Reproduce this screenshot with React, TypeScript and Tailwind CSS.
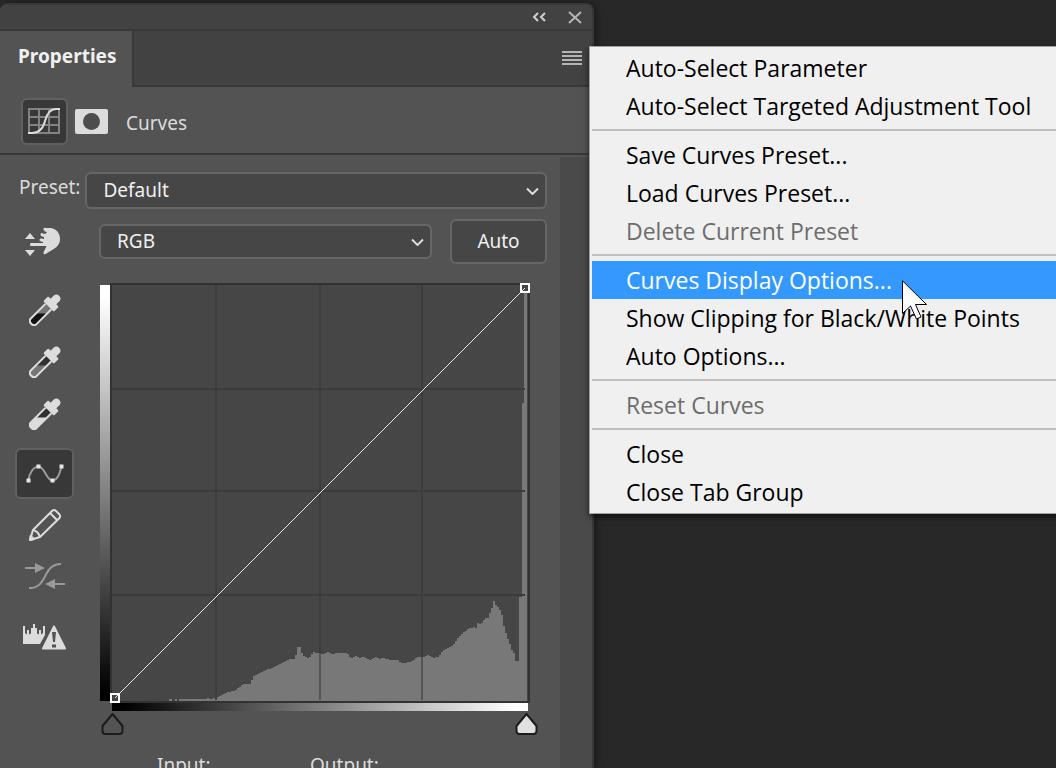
import React, { useState } from 'react';

interface MenuItem {
  label: string;
  disabled?: boolean;
}

const menuGroups: MenuItem[][] = [
  [{ label: 'Auto-Select Parameter' }, { label: 'Auto-Select Targeted Adjustment Tool' }],
  [
    { label: 'Save Curves Preset...' },
    { label: 'Load Curves Preset...' },
    { label: 'Delete Current Preset', disabled: true },
  ],
  [
    { label: 'Curves Display Options...' },
    { label: 'Show Clipping for Black/White Points' },
    { label: 'Auto Options...' },
  ],
  [{ label: 'Reset Curves', disabled: true }],
  [{ label: 'Close' }, { label: 'Close Tab Group' }],
];

// outline of the histogram, x and y in chart units
const histogram: [number, number][] = [
  [79, 416], [104, 416], [106, 415], [110, 416], [116, 414], [120, 412], [128, 409], [135, 407],
  [140, 403], [143, 401], [149, 401], [153, 393], [160, 389], [168, 386], [177, 382], [188, 376],
  [193, 376], [195, 372], [197, 364], [199, 364], [200, 369], [203, 373], [208, 375], [212, 369],
  [216, 370], [218, 369], [222, 371], [227, 369], [230, 371], [237, 370], [246, 370], [250, 375],
  [255, 373], [258, 375], [263, 374], [270, 377], [275, 374], [278, 376], [283, 375], [290, 377],
  [297, 377], [300, 380], [310, 379], [317, 374], [322, 374], [328, 372], [332, 375], [337, 374],
  [343, 367], [352, 363], [357, 355], [362, 350], [367, 346], [373, 344], [375, 345], [377, 340],
  [380, 341], [385, 335], [388, 335], [389, 330], [391, 325], [393, 318], [395, 322], [398, 325],
  [401, 332], [402, 340], [405, 350], [410, 364], [412, 370], [414, 370], [415, 378], [417, 378],
  [418, 372], [419, 360], [420, 314],
];

function heightAt(x: number) {
  const i = histogram.findIndex((p) => p[0] > x);
  if (i < 1) return 418;
  const [x0, y0] = histogram[i - 1];
  const [x1, y1] = histogram[i];
  return Math.round(y0 + ((y1 - y0) * (x - x0)) / (x1 - x0));
}

function histogramPath() {
  let d = 'M69 418V416H72V418H75V416H77V418H79';
  for (let x = 79; x < 419; x += 2) {
    d += `V${heightAt(x)}H${x + 2}`;
  }
  return d + 'V314H422V120H424V9H427V418H79Z';
}

function CurvesChart() {
  return (
    <svg width="440" height="454" viewBox="0 0 440 454" role="img" aria-label="Curve with histogram">
      <defs>
        <linearGradient id="output-ramp" x1="0" y1="0" x2="0" y2="1">
          <stop offset="0.03" stopColor="#fff" />
          <stop offset="0.98" stopColor="#000" />
        </linearGradient>
        <linearGradient id="input-ramp" x1="0" y1="0" x2="1" y2="0">
          <stop offset="0.03" stopColor="#000" />
          <stop offset="0.97" stopColor="#fff" />
        </linearGradient>
      </defs>
      <g shapeRendering="crispEdges">
        <rect x="0" y="2" width="10" height="416" fill="url(#output-ramp)" />
        <rect x="10" y="0" width="420" height="420" fill="#323232" />
        <rect x="12" y="2" width="416" height="416" fill="#464646" />
        <path d={histogramPath()} fill="#787878" />
        <path d="M115 2h2v415h-2zM219 2h2v372h-2zM321 2h2v372h-2z" fill="#3c3c3c" />
        <path d="M12 105h413v2H12zM12 207h413v2H12zM12 311h413v2H12z" fill="#3c3c3c" />
        <path d="M219 370h2v47h-2zM321 374h2v43h-2z" fill="#555" />
        <rect x="12" y="420" width="416" height="8" fill="url(#input-ramp)" />
      </g>
      <path d="M15 415L425 5" stroke="#e8e8e8" strokeWidth="1" />
      <g fill="none" stroke="#fff" strokeWidth="2" shapeRendering="crispEdges">
        <rect x="11" y="411" width="8" height="8" />
        <rect x="421" y="1" width="8" height="8" />
      </g>
      <g stroke="#1c1c1c" strokeWidth="2" strokeLinejoin="round">
        <path d="M12.500 431L22.500 443V448Q22.500 451 19.500 451H5.500Q2.500 451 2.500 448V443Z" fill="#535353" />
        <path d="M426.500 431L436.500 443V448Q436.500 451 433.500 451H419.500Q416.500 451 416.500 448V443Z" fill="#e0e0e0" />
      </g>
    </svg>
  );
}

function Chevron() {
  return (
    <svg
      className="pointer-events-none absolute inset-y-0 right-2 my-auto"
      width="13"
      height="8"
      viewBox="0 0 13 8"
      fill="none"
      stroke="#dcdcdc"
      strokeWidth="2"
    >
      <path d="M1 1.500L6.500 7L12 1.500" />
    </svg>
  );
}

function Eyedropper({ tube, tip }: { tube: string; tip: string }) {
  return (
    <svg width="32" height="32" viewBox="0 0 32 32">
      <g transform="rotate(45 16 16)">
        <path d="M12 11H20V32Q20 35.500 16 35.500T12 32Z" fill={tube} />
        <path d="M12 25L20 17V32Q20 35.500 16 35.500T12 32Z" fill={tip} />
        <path
          d="M12 11V32Q12 35.500 16 35.500T20 32V11"
          fill="none"
          stroke="#dcdcdc"
          strokeWidth="2"
        />
        <path
          d="M12 0Q12 -4 16 -4T20 0V4H22Q23.500 4 23.500 5V10Q23.500 11 22 11H10Q8.500 11 8.500 10V5Q8.500 4 10 4H12Z"
          fill="#dcdcdc"
        />
      </g>
    </svg>
  );
}

function HandIcon() {
  return (
    <svg width="38" height="30" viewBox="0 0 38 30" fill="#dcdcdc">
      <path d="M1 12L6 6L11 12ZM1 23H11L6 29Z" />
      <path d="M19.500 1.500Q20 0.500 22 1H26C32 1 36 6 36 12C36 17 33 20 29 22.500L21.500 27Q19.500 28 19.500 26C19.500 24 21.500 22 22.500 19H7Q6 19 6 17.500T7 16H19V15L17 14.500Q15 14 15.500 12.500T17.500 11.500L20 12V10L18 9.500Q16 8.500 16.500 7T19 6.500L21 7L23 5.500L20.500 4Q19 3 19.500 1.500Z" />
    </svg>
  );
}

function CurvePointsIcon() {
  return (
    <svg width="38" height="20" viewBox="0 0 38 20">
      <path
        d="M2.500 16.500C3 9 8 2.500 12.500 2.500C19 2.500 20 16.500 26.500 16.500C31 16.500 34 9 35.500 2.500"
        fill="none"
        stroke="#9a9a9a"
        strokeWidth="2"
      />
      <path d="M.5 14.500h4v4h-4zM10.500 .5h4v4h-4zM24.500 14.500h4v4h-4zM33.500 .5h4v4h-4z" fill="#e6e6e6" />
    </svg>
  );
}

function PencilIcon() {
  return (
    <svg
      width="34"
      height="34"
      viewBox="0 0 34 34"
      fill="none"
      stroke="#dcdcdc"
      strokeWidth="2"
      strokeLinejoin="round"
    >
      <path d="M2 32L5 22L24 3Q26 1 28 3L31.500 6.500Q33 8.500 31 10.500L12 29Z" />
      <path d="M5 22Q10 23 12 29M22 5L29 12" />
      <path d="M2 32L2.500 28L6 31Z" fill="#dcdcdc" />
    </svg>
  );
}

function SmoothIcon() {
  return (
    <svg width="42" height="28" viewBox="0 0 42 28">
      <path d="M5 26C24 27 18 2 37 2" fill="none" stroke="#9a9a9a" strokeWidth="2" />
      <path d="M1 5h10V1l10 5L11 11V7H1zM41 21H31v-4l-10 5L31 27v-4h10z" fill="#9a9a9a" />
    </svg>
  );
}

function HistogramWarningIcon() {
  return (
    <svg width="44" height="26" viewBox="0 0 44 26" fill="#dcdcdc">
      <path d="M0 2H2V9L4 10.500V6H6V10.500L8 9.500V4H10V0H12V4H14V9.500L16 10.500V6H18V10.500L20 9V2H22V11L17 20H0Z" />
      <path d="M31 2.500L42 24.500H20Z" stroke="#dcdcdc" strokeWidth="2" strokeLinejoin="round" />
      <path d="M29 8H33L32 18H30ZM29 20.500h4v3h-4z" fill="#535353" />
    </svg>
  );
}

function PanelMenu() {
  return (
    <div
      role="menu"
      className="absolute left-full top-[41px] -ml-[3px] w-max min-w-[480px] border border-[#a0a0a0] bg-[#f0f0f0] pb-0.5 pl-0.5 pt-0.5 font-['Open_Sans','Noto_Sans',sans-serif] shadow-[0_3px_6px_rgba(0,0,0,0.6)]"
    >
      {menuGroups.map((group, i) => (
        <React.Fragment key={group[0].label}>
          {i > 0 && <div role="separator" className="mb-[5px] mt-1 h-0.5 bg-[#c0c0c0]" />}
          {group.map((item) => (
            <button
              key={item.label}
              role="menuitem"
              disabled={item.disabled}
              className={
                item.label === 'Curves Display Options...'
                  ? 'block h-[38px] w-full bg-[#3399ff] pl-[34px] pr-5 text-left text-[23px] leading-[38px] whitespace-nowrap text-white'
                  : 'block h-[38px] w-full pl-[34px] pr-5 text-left text-[23px] leading-[38px] whitespace-nowrap text-black disabled:text-[#6d6d6d]'
              }
            >
              {item.label}
            </button>
          ))}
        </React.Fragment>
      ))}
      <svg
        className="pointer-events-none absolute left-[312px] top-[233px]"
        width="26"
        height="41"
        viewBox="0 0 26 41"
      >
        <path
          d="M.5 .8V33.500L8.500 26L14.500 39L19 37L13.500 24.500H24.500Z"
          fill="#fff"
          stroke="#000"
          strokeWidth="1"
        />
      </svg>
    </div>
  );
}

export default function App() {
  const [preset, setPreset] = useState('Default');
  const [channel, setChannel] = useState('RGB');

  return (
    <div className="h-screen overflow-hidden bg-[#282828] pt-[3px] font-['Noto_Sans','Open_Sans',sans-serif] text-[#dcdcdc]">
      <section className="relative flex h-full w-9/16 flex-col rounded-t-lg border-r-2 border-t-2 border-[#383838] bg-[#535353] shadow-[2px_0_6px_rgba(0,0,0,0.4)]">
        <div className="flex h-[26px] shrink-0 items-center justify-end gap-5 rounded-t-md border-b-2 border-[#383838] bg-[#424242] pr-2.5">
          <button aria-label="Collapse panel">
            <svg width="16" height="10" viewBox="0 0 16 10" fill="none" stroke="#d0d0d0" strokeWidth="2">
              <path d="M6 1L2 5L6 9M13 1L9 5L13 9" />
            </svg>
          </button>
          <button aria-label="Close panel">
            <svg width="14" height="14" viewBox="0 0 14 14" fill="none" stroke="#b4b4b4" strokeWidth="2">
              <path d="M1 2L13 13M13 2L1 13" />
            </svg>
          </button>
        </div>

        <div className="flex h-14 shrink-0">
          <h1 className="border-r-2 border-[#383838] pl-[18px] pr-4 text-[19px] font-bold leading-[50px] text-[#f0f0f0]">
            Properties
          </h1>
          <div className="flex flex-1 items-center justify-end border-b-2 border-[#383838] bg-[#424242] pr-2.5">
            <button aria-label="Panel menu">
              <svg width="20" height="14" viewBox="0 0 20 14" fill="#b4b4b4">
                <path d="M0 0h20v2H0zM0 4h20v2H0zM0 8h20v2H0zM0 12h20v2H0z" />
              </svg>
            </button>
          </div>
        </div>

        <div className="flex h-[68px] shrink-0 items-center border-b-2 border-[#383838] pl-[21px] pt-0.5">
          <button
            aria-label="Curves adjustment"
            className="flex size-[47px] items-center justify-center rounded-md border-2 border-[#606060] bg-[#383838]"
          >
            <svg width="35" height="28" viewBox="0 0 35 28" fill="none" strokeWidth="2">
              <path
                d="M2 2H32V26H2ZM12 2V26M22 2V26M2 10H32M2 18H32"
                stroke="#828282"
                shapeRendering="crispEdges"
              />
              <path d="M1 26H5C12 26 16 22 18 14S23 2 29 2H33" stroke="#dcdcdc" />
            </svg>
          </button>
          <button aria-label="Layer mask" className="ml-[7px]">
            <svg width="33" height="25" viewBox="0 0 33 25">
              <rect width="33" height="25" rx="2" fill="#dcdcdc" />
              <circle cx="16.500" cy="12.500" r="8.500" fill="#4d4d4d" />
            </svg>
          </button>
          <h2 className="ml-[18px] pt-1 text-[19px] leading-6">Curves</h2>
        </div>

        <div className="flex min-h-0 flex-1">
          <div className="min-w-0 flex-1 pr-[13px] pt-[17px]">
            <div className="flex items-center gap-[5px] pl-[19px]">
              <label htmlFor="preset" className="pb-[7px] text-[19px] leading-6">
                Preset:
              </label>
              <div className="relative flex-1">
                <select
                  id="preset"
                  value={preset}
                  onChange={(e) => setPreset(e.target.value)}
                  className="block h-[37px] w-full appearance-none rounded-md border-2 border-[#666] bg-[#464646] px-4 pb-0.5 text-[19px] leading-6 text-[#f0f0f0]"
                >
                  <option>Default</option>
                </select>
                <Chevron />
              </div>
            </div>

            <div className="mt-2.5 flex items-center">
              <div className="w-[99px] shrink-0 pl-6">
                <button aria-label="On-image adjustment" className="block">
                  <HandIcon />
                </button>
              </div>
              <div className="relative flex-1">
                <select
                  aria-label="Channel"
                  value={channel}
                  onChange={(e) => setChannel(e.target.value)}
                  className="block h-[35px] w-full appearance-none rounded-md border-2 border-[#666] bg-[#464646] px-4 pb-0.5 text-[19px] leading-6 text-[#f0f0f0]"
                >
                  <option>RGB</option>
                </select>
                <Chevron />
              </div>
              <button className="ml-[18px] h-[45px] w-[97px] rounded-md border-2 border-[#666] bg-[#464646] pb-0.5 text-[19px] leading-6 text-[#f0f0f0]">
                Auto
              </button>
            </div>

            <div className="mt-[19px] flex">
              <div className="flex w-[100px] shrink-0 flex-col pl-[15px] pt-[11px]">
                <div className="flex w-[59px] flex-col items-center gap-5">
                  <button aria-label="Sample black point" className="block">
                    <Eyedropper tube="#757575" tip="#111" />
                  </button>
                  <button aria-label="Sample gray point" className="block">
                    <Eyedropper tube="#303030" tip="#757575" />
                  </button>
                  <button aria-label="Sample white point" className="block">
                    <Eyedropper tube="#303030" tip="#dcdcdc" />
                  </button>
                </div>
                <div className="mt-[18px] flex w-[59px] flex-col items-center">
                  <button
                    aria-label="Edit points"
                    className="flex h-[51px] w-full items-center justify-center rounded-md border-2 border-[#606060] bg-[#383838]"
                  >
                    <CurvePointsIcon />
                  </button>
                  <button aria-label="Draw curve" className="mt-[9px]">
                    <PencilIcon />
                  </button>
                  <button aria-label="Smooth curve" className="mt-5">
                    <SmoothIcon />
                  </button>
                  <button aria-label="Calculate histogram" className="mt-[34px]">
                    <HistogramWarningIcon />
                  </button>
                </div>
              </div>
              <div>
                <CurvesChart />
                <div className="mt-4 flex pl-[57px] text-[19px] leading-6">
                  <span className="w-[153px]">Input:</span>
                  <span>Output:</span>
                </div>
              </div>
            </div>
          </div>
          <div className="mt-0.5 w-8 shrink-0 bg-[#4a4a4a]" />
        </div>

        <PanelMenu />
      </section>
    </div>
  );
}
